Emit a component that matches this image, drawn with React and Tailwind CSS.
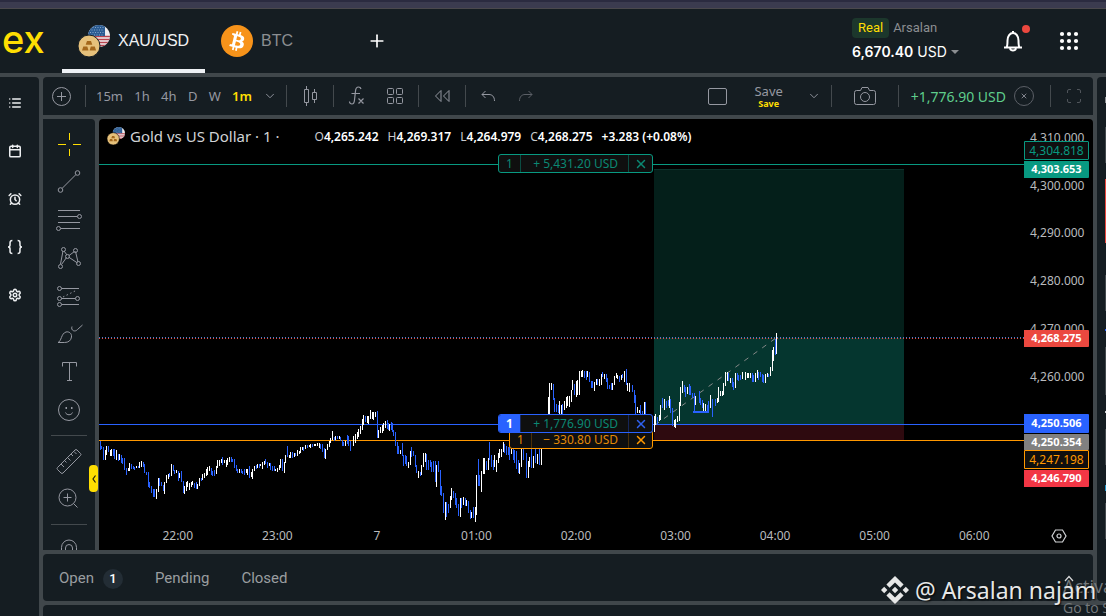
import React from "react";
import {
  Calendar,
  AlarmClock,
  Settings,
  List,
  ChevronDown,
  Plus,
  X,
} from "lucide-react";

/* Candle data: "x high low colour", measured in thirds of a pixel from each segment's origin. */
const SEGMENTS = [
  {
    x: -9,
    y: 271,
    bars: "31 153 180 b,34 168 178 b,40 170 210 b,46 180 210 w,49 168 196 w,55 168 185 b,61 180 198 w,64 177 197 w,70 177 198 b,73 178 208 b,79 180 210 w,85 193 213 b,88 192 210 w,94 195 220 b,97 204 222 b,103 205 240 b,109 235 255 b,115 234 243 w,118 219 243 w,124 222 238 b,130 228 238 b,133 231 240 b,139 228 234 w,145 228 234 b,148 216 234 w,154 213 231 w,160 216 231 b,163 222 250 b,169 246 255 b,175 246 290 b,178 275 293 b,184 288 310 b,190 297 320 b,193 297 321 b,199 297 326 w,205 264 306 w,208 265 290 b,214 276 288 b,220 285 303 b,223 276 312 w,229 255 280 w,235 252 267 w,238 249 261 b,244 222 258 w,250 225 244 b,253 240 252 b,259 240 250 w,265 243 272 b,268 248 264 w,274 243 276 b,280 273 309 b,283 288 312 w,289 276 303 w,292 273 290 w,298 279 300 w,304 275 290 w,307 273 285 w,313 279 294 b,319 276 297 b,322 282 298 w,328 264 288 w,334 264 273 b,337 252 270 w,343 249 264 w,349 237 258 w,352 231 256 w,358 228 243 w,364 234 255 b,367 243 258 b,373 240 258 b,379 228 252 w,382 210 235 w,388 210 228 w,394 208 220 w,397 201 225 b,403 210 220 w,409 210 231 w,412 205 225 w,418 201 216 w,424 201 216 b,427 206 216 b,433 208 235 b,439 225 243 b,442 238 250 b,448 237 249 w,454 238 249 b,457 243 252 b,463 237 255 b,469 237 250 w,472 237 255 w,478 228 264 b,484 246 260 w,487 237 267 w,493 228 243 w,499 226 237 b,502 222 234 w,508 222 234 b,511 222 228 w,517 216 237 w,523 213 225 w,526 207 222 b,532 216 234 b,538 220 228 w,541 220 240 b,547 228 243 b,553 228 242 b,556 237 243 w,562 234 246 w,568 225 240 w,571 207 235 w,577 207 244 b,583 216 249 w,586 195 220 w,592 168 200 b,598 195 204 w,601 186 204 w,607 186 204 b,613 189 201 w,616 189 198 b,622 180 198 w,628 183 192 w,631 171 189 w,637 171 180 w,640 171 183 b,646 165 177 w,652 165 174 b,658 165 171 w,661 162 174 w,667 163 171 b,673 162 168 w,676 162 168 w,682 160 168 w,688 160 174 w,691 162 178 b,697 162 186 b,703 173 204 b,706 177 207 w,712 162 180 w,718 153 172 w,721 144 160 w,727 123 150 w,733 141 153 b,736 138 150 w,742 138 148 b,748 138 148 w,751 141 153 b,757 150 167 b,760 156 168 b,766 153 168 w,772 135 162 b,775 138 168 b,781 152 183 b,790 138 168 w,796 132 158 w,802 125 146 w,805 117 140 w,811 108 132 w,817 88 122 w,820 75 105 w,826 78 95 b,832 78 100 w,835 78 102 w",
  },
  {
    x: 261,
    y: 231,
    bars: "1 228 252 w,7 210 240 w,10 195 222 w,16 198 213 b,22 198 210 w,25 198 216 w,31 180 208 w,37 186 206 w,40 186 210 w,46 186 202 w,52 183 264 b,55 240 264 w,61 231 249 w,67 225 250 w,70 220 243 w,76 213 234 w,82 210 238 b,85 219 240 b,88 222 243 w,94 216 240 b,97 219 245 b,100 240 258 b,106 245 288 b,112 276 312 b,115 288 312 b,121 300 312 w,127 278 318 b,130 315 348 b,136 315 342 b,139 318 348 b,145 336 354 w,151 303 345 w,154 291 322 b,160 303 318 b,166 315 350 b,169 345 370 b,175 363 384 w,181 366 378 b,184 345 375 w,190 310 352 w,196 309 336 w,199 312 360 b,205 330 360 b,211 330 350 b,214 336 366 b,220 333 366 b,226 333 395 b,229 345 410 w,235 333 366 b,241 360 435 b,244 408 438 b,250 430 489 b,256 456 510 w,259 456 500 b,265 462 490 b,271 438 475 w,274 414 450 w,280 423 444 b,286 429 465 b,289 444 474 b,295 462 498 b,301 444 501 w,304 444 475 b,310 441 465 w,316 444 468 b,319 450 468 w,325 453 490 b,331 480 506 b,334 486 504 w,340 470 503 b,346 471 516 w,349 375 495 w,355 327 408 b,358 375 408 b,364 363 426 w,370 324 372 w,373 324 372 w,379 333 360 b,385 324 360 w,388 275 330 b,394 315 350 b,400 330 360 b,403 315 350 w,409 330 366 w,415 309 340 w,418 297 325 w,424 297 322 w,430 276 306 w,433 282 310 b,439 288 315 b,445 290 315 b,448 290 328 b,454 290 310 w,460 297 330 b,463 300 340 b,469 303 358 b,475 330 368 b,478 340 372 w,484 297 350 w,490 297 330 b,499 310 384 b,505 333 384 w,508 320 350 w,514 290 354 b,520 318 354 w,526 297 340 b,532 312 342 w,538 297 345 b,544 297 345 w,565 140 195 w,568 99 192 w,574 99 120 w,580 102 150 b,583 144 186 b,589 162 186 b,595 165 190 b,598 153 192 w,604 165 192 w,607 162 192 b,613 153 180 w,619 141 174 w,622 138 168 w,628 138 170 w,634 120 156 w,637 90 120 w,643 102 135 b,649 93 140 w,652 90 135 w,658 63 135 w,664 63 80 w,667 60 82 w,673 63 84 b,679 63 90 b,682 63 82 w,688 66 96 b,694 93 115 b,697 93 114 b,703 96 123 w,709 87 105 w,712 87 105 b,718 87 108 w,724 72 105 w,727 66 80 b,733 72 87 w,739 72 96 b,742 84 117 b,748 105 118 b,754 99 120 b,757 99 120 w,763 78 104 w,769 69 84 w,772 75 87 w,778 78 96 b,784 75 90 w,787 72 84 b,793 63 95 w,799 57 105 b,802 98 123 w,808 99 126 w,817 105 126 b,823 120 160 b,826 135 192 b,832 171 190 w,838 180 190 w,841 165 195 b,847 183 195 b,853 156 192 w,856 156 192 b",
  },
  {
    x: 531,
    y: 201,
    bars: "73 288 336 w,76 282 315 w,82 291 313 b,88 285 303 w,91 255 300 w,97 234 264 b,103 237 270 w,109 243 265 b,115 240 258 b,118 228 264 w,121 238 280 b,127 265 318 b,133 300 320 w,136 297 324 w,142 288 305 w,148 246 303 w,151 201 258 w,157 183 219 w,163 195 216 b,166 201 230 b,172 201 222 w,178 192 225 b,181 198 225 b,187 219 235 b,193 220 275 b,196 228 255 w,208 213 250 b,211 235 256 b,217 240 265 b,220 250 279 w,226 252 276 w,232 255 276 b,235 243 276 b,241 225 264 w,247 238 291 b,256 237 258 b,262 234 250 w,265 201 246 w,271 213 228 w,277 213 228 w,280 190 225 w,286 156 198 w,292 156 183 w,295 158 183 b,301 174 188 w,307 174 200 b,310 186 210 b,316 158 204 w,322 160 180 b,325 165 184 b,331 165 180 b,337 156 178 w,346 156 180 w,352 158 173 w,355 158 173 w,361 158 172 w,367 158 186 b,370 165 186 b,376 159 186 w,382 150 175 w,385 156 180 b,391 156 172 b,397 162 186 b,400 165 188 b,406 162 188 w,412 159 171 w,415 162 171 b,421 141 168 w,427 90 152 w,430 81 123 w,436 57 105 b,439 39 102 w",
  },
];

const CANDLES = SEGMENTS.flatMap((s) =>
  s.bars.split(",").map((bar) => {
    const [x, hi, lo, c] = bar.split(" ");
    return {
      x: s.x + Math.floor(x / 3),
      y: s.y + Math.round(hi / 3),
      h: Math.max(1, Math.round((lo - hi) / 3)),
      up: c === "w",
    };
  })
);

const PRICES = [
  ["4,310.000", 19],
  ["4,300.000", 67],
  ["4,290.000", 114],
  ["4,280.000", 162],
  ["4,270.000", 210],
  ["4,260.000", 258],
];

const PRICE_TAGS = [
  ["4,304.818", 22, "h-[19px] border border-[#089981] bg-[#0f0f0f] text-[12px] text-[#089981]"],
  ["4,303.653", 42, "h-[17px] bg-[#089981] text-[11px] font-bold text-white"],
  ["4,268.275", 211, "h-[17px] bg-[#eb483f] text-[11px] font-bold text-white"],
  ["4,250.506", 295, "h-[19px] bg-[#2962ff] text-[11px] font-bold text-white"],
  ["4,250.354", 315, "h-[16px] bg-[#808080] text-[11px] font-bold text-white"],
  ["4,247.198", 331, "h-[19px] border border-[#ff9800] bg-[#0f0f0f] text-[12px] text-[#ff9800]"],
  ["4,246.790", 351, "h-[17px] bg-[#f23645] text-[11px] font-bold text-white"],
];

const TIMES = ["22:00", "23:00", "7", "01:00", "02:00", "03:00", "04:00", "05:00", "06:00"];

function Sep() {
  return <span className="h-[22px] w-px shrink-0 bg-[#43494d]" />;
}

function IconButton({ label, className = "", children }) {
  return (
    <button aria-label={label} className={`flex shrink-0 items-center justify-center ${className}`}>
      {children}
    </button>
  );
}

function GoldPair({ size, ring }) {
  return (
    <svg width={size} height={size} viewBox="0 0 32 32" className="shrink-0">
      <defs>
        <clipPath id={`flag${size}`}>
          <circle cx="21" cy="11" r="11" />
        </clipPath>
      </defs>
      <g clipPath={`url(#flag${size})`}>
        <rect x="10" width="22" height="22" fill="#f0eef0" />
        <path d="M10 11.500h22M10 14.500h22M10 17.500h22M10 20.500h22" stroke="#b8434e" strokeWidth="1.400" />
        <rect x="10" width="17" height="11" fill="#2b5c93" />
        <path d="M12 2.500h14M11 5h15M12 7.500h14M11 10h15" stroke="#9db8d6" strokeWidth=".8" strokeDasharray="1 1.500" />
      </g>
      <circle cx="11" cy="21" r="11" fill="#e6c17b" stroke={ring} strokeWidth="1" />
      <path d="M9 16h4l1.300 3.800H7.700zM5.300 21.500h4l1.200 4H4zM12.800 21.500h4l1.300 4h-6.500z" fill="#a4681c" />
    </svg>
  );
}

function Coin() {
  return (
    <svg width="32" height="32" viewBox="0 0 32 32" className="shrink-0">
      <circle cx="16" cy="16" r="16" fill="#f7931a" />
      <path
        fill="#fff"
        d="M23.189 14.020c.314-2.096-1.283-3.223-3.465-3.975l.708-2.840-1.728-.43-.69 2.765c-.454-.114-.92-.22-1.385-.326l.695-2.783L15.596 6l-.708 2.839c-.376-.086-.746-.17-1.104-.26l.002-.009-2.384-.595-.46 1.846s1.283.294 1.256.312c.7.175.826.638.805 1.006l-.806 3.235c.048.012.11.030.18.057l-.183-.045-1.130 4.532c-.086.212-.303.531-.793.410.018.025-1.256-.313-1.256-.313l-.858 1.978 2.250.561c.418.105.828.215 1.231.318l-.715 2.872 1.727.43.708-2.840c.472.127.930.245 1.378.357l-.706 2.828 1.728.43.715-2.866c2.948.558 5.164.333 6.097-2.333.752-2.146-.037-3.385-1.588-4.192 1.130-.26 1.980-1.003 2.207-2.538zm-3.950 5.538c-.533 2.147-4.148.986-5.320.695l.950-3.805c1.172.293 4.929.872 4.370 3.110zm.535-5.569c-.487 1.953-3.495.960-4.470.717l.860-3.450c.975.243 4.118.696 3.610 2.733z"
      />
    </svg>
  );
}

function Header() {
  return (
    <header className="flex h-16 items-stretch bg-[#151d22] pr-0.5 font-[Roboto,sans-serif]">
      <a href="#home" className="flex w-[62px] items-center pb-1 pl-[2px] font-[Inter,sans-serif] text-[38px] font-medium leading-none text-[#ffde02]">
        ex
      </a>
      <nav className="flex">
        <button className="flex w-[143px] items-center gap-2 border-b-4 border-[#eef1f5] pl-4 pt-1 font-[Liberation_Sans,sans-serif] text-base text-[#f0f1f2]">
          <GoldPair size={32} ring="#151d22" />
          XAU/USD
        </button>
        <button className="flex w-[143px] items-center gap-2 pl-4 font-[Liberation_Sans,sans-serif] text-base text-[#8b8e91]">
          <Coin />
          BTC
        </button>
        <IconButton label="Add instrument" className="w-[58px] text-white">
          <Plus size={20} strokeWidth={2} />
        </IconButton>
      </nav>
      <button className="ml-auto flex w-[140px] flex-col justify-center gap-1 text-left">
        <span className="flex items-center gap-1 text-[13px] leading-5">
          <span className="rounded-sm bg-[#1c372c] px-1.5 text-[#ffde02]">Real</span>
          <span className="text-[#8b8e91]">Arsalan</span>
        </span>
        <span className="flex items-center gap-1 pb-0.5 font-[Inter,sans-serif] text-[14px] leading-5 text-white">
          <b className="font-semibold">6,670.40</b> USD
          <svg width="8" height="4" viewBox="0 0 8 4">
            <path d="M0 0h8L4 4z" fill="#8b8e91" />
          </svg>
        </span>
      </button>
      <button aria-label="Notifications" className="relative flex w-[42px] items-center justify-center text-white">
        <svg width="22" height="22" viewBox="0 0 22 22" fill="none" stroke="currentColor" strokeWidth="2">
          <path d="M2 17.500h18M4.500 17.500c1-1.500 1-3 1-7C5.500 6 8 3 11 3s5.500 3 5.500 7.500c0 4 0 5.500 1 7M8 18.500c.5 1.500 1.500 2 3 2s2.500-.5 3-2M11 1v2" />
        </svg>
        <span className="absolute right-1 top-4 size-2 rounded-full bg-[#eb483f]" />
      </button>
      <IconButton label="Applications" className="w-[70px] text-white">
        <svg width="20" height="20" viewBox="0 0 20 20" fill="currentColor">
          {[3, 10, 17].map((y) => [3, 10, 17].map((x) => <circle key={`${x}-${y}`} cx={x} cy={y} r="2.100" />))}
        </svg>
      </IconButton>
    </header>
  );
}

function BracesIcon({ size, strokeWidth }) {
  return (
    <svg width={size} height={size} viewBox="0 0 24 24" fill="none" stroke="currentColor" strokeWidth={strokeWidth} className="overflow-visible">
      <path d="M7.500 1C4.500 1 3.500 2 3.500 4.500V8.500C3.500 10.500 2.500 12 0 12c2.500 0 3.500 1.500 3.500 3.500v4C3.500 22 4.500 23 7.500 23M16.500 1c3 0 4 1 4 3.500V8.500c0 2 1 3.500 3.500 3.500-2.500 0-3.500 1.500-3.500 3.500v4c0 2.500-1 3.500-4 3.500" />
    </svg>
  );
}

function Sidebar() {
  const items = [
    ["Watchlist", List],
    ["Calendar", Calendar],
    ["Alerts", AlarmClock],
    ["Scripts", BracesIcon],
    ["Settings", Settings],
  ];
  return (
    <aside className="flex w-[39px] shrink-0 flex-col gap-[34px] rounded-tr bg-[#151d22] pl-2 pt-[19px] text-[#eceef0]">
      {items.map(([label, Icon]) => (
        <button key={label} aria-label={label} className="size-3.5">
          <Icon size={14} strokeWidth={2.600} />
        </button>
      ))}
    </aside>
  );
}

function Toolbar() {
  return (
    <div className="flex h-[38px] items-center rounded-t bg-[#151d22] text-[13px] text-[#9598a1]">
      <IconButton label="Compare" className="mr-1.5 w-9">
        <svg width="20" height="20" viewBox="0 0 20 20" fill="none" stroke="currentColor">
          <circle cx="10.500" cy="10.500" r="9" />
          <path d="M10.500 6v9M6 10.500h9" />
        </svg>
      </IconButton>
      <Sep />
      <div className="ml-1 flex w-[168px] justify-between px-1.5 pt-0.5">
        {["15m", "1h", "4h", "D", "W"].map((t) => (
          <button key={t}>{t}</button>
        ))}
        <button className="font-semibold text-[#ffde02]">1m</button>
      </div>
      <IconButton label="More intervals" className="mr-1 w-6">
        <ChevronDown size={14} strokeWidth={1.600} />
      </IconButton>
      <Sep />
      <IconButton label="Chart type" className="w-[46px]">
        <svg width="16" height="22" viewBox="0 0 16 22" fill="none" stroke="currentColor">
          <path d="M2.500 4.500h4v13h-4zM4.500 1v3.500M4.500 17.500V21M10.500 7.500h4v7h-4zM12.500 4v3.500M12.500 14.500V18" />
        </svg>
      </IconButton>
      <Sep />
      <IconButton label="Indicators" className="w-[46px]">
        <svg width="18" height="20" viewBox="0 0 18 20" fill="none" stroke="currentColor" strokeWidth="1.200">
          <path d="M13 3c-.3-1.300-1.300-2-2.500-2C8.500 1 7.700 2.500 7.500 5L6.500 14c-.2 2.500-1 4-2.500 4-1.500 0-2.500-.8-2.500-2.500M3.500 7.500H12M10.500 12.500l5 5M15.500 12.500l-5 5" />
        </svg>
      </IconButton>
      <IconButton label="Layouts" className="mr-2 w-[30px]">
        <svg width="18" height="18" viewBox="0 0 18 18" fill="none" stroke="currentColor">
          <rect x="1.500" y="1.500" width="6" height="6" rx="1" />
          <rect x="10.500" y="1.500" width="6" height="6" rx="1" />
          <rect x="1.500" y="10.500" width="6" height="6" rx="1" />
          <rect x="10.500" y="10.500" width="6" height="6" rx="1" />
        </svg>
      </IconButton>
      <Sep />
      <IconButton label="Replay" className="w-[46px]">
        <svg width="16" height="14" viewBox="0 0 16 14" fill="none" stroke="currentColor">
          <path d="M7 1.500v11L1.500 7zM15 1.500v11L9.500 7z" />
        </svg>
      </IconButton>
      <Sep />
      <IconButton label="Undo" className="w-11">
        <svg width="14" height="12" viewBox="0 0 14 12" fill="none" stroke="currentColor">
          <path d="M4.500 1 1 4.500 4.500 8M1 4.500h7c3 0 5.500 2 5.500 6.500" />
        </svg>
      </IconButton>
      <IconButton label="Redo" className="w-8 text-[#5b5f66]">
        <svg width="14" height="12" viewBox="0 0 14 12" fill="none" stroke="currentColor">
          <path d="M9.500 1 13 4.500 9.500 8M13 4.500H6C3 4.500.5 6.500.5 11" />
        </svg>
      </IconButton>
      <div className="ml-auto flex items-center">
        <IconButton label="Select layout" className="w-[46px]">
          <svg width="19" height="17" viewBox="0 0 19 17" fill="none" stroke="currentColor">
            <rect x=".5" y=".5" width="18" height="16" rx="1.500" />
          </svg>
        </IconButton>
        <button className="flex w-14 flex-col items-center leading-[14px]">
          Save
          <span className="text-[9px] font-bold leading-[11px] text-[#ffde02]">Save</span>
        </button>
        <IconButton label="Manage layouts" className="w-[34px]">
          <ChevronDown size={14} strokeWidth={1.600} />
        </IconButton>
        <Sep />
        <IconButton label="Take a snapshot" className="w-[66px]">
          <svg width="22" height="18" viewBox="0 0 22 18" fill="none" stroke="currentColor">
            <path d="M2.500 3.500h4l1.500-3h6l1.500 3h4q2 0 2 2v10q0 2-2 2h-17q-2 0-2-2v-10q0-2 2-2z" />
            <circle cx="11" cy="10" r="4.500" />
          </svg>
        </IconButton>
        <Sep />
        <span className="ml-3 mr-2 text-[14px] text-[#5fce8c]">+1,776.90 USD</span>
        <IconButton label="Close all positions" className="mr-4 size-5 rounded-full border border-[#5b5f66]">
          <X size={8} strokeWidth={2.500} />
        </IconButton>
        <Sep />
        <IconButton label="Fullscreen" className="ml-1 w-[38px] text-[#50555b]">
          <svg width="14" height="14" viewBox="0 0 14 14" fill="none" stroke="currentColor">
            <path d="M.5 4V2Q.5.500 2 .5h2M10 .5h2q1.500 0 1.500 1.500v2M13.500 10v2q0 1.500-1.500 1.500h-2M4 13.500H2Q.5 13.500.5 12v-2" />
          </svg>
        </IconButton>
      </div>
    </div>
  );
}

const TOOLS = [
  ["Crosshair", <path key="p" stroke="#ffde02" d="M14.500 3v7M14.500 19v7M3 14.500h8M18 14.500h8" />],
  ["Trend line", <><circle cx="5.500" cy="22" r="2.300" /><circle cx="22.500" cy="5" r="2.300" /><path d="M7.200 20.300 20.800 6.700" /></>],
  ["Fibonacci", <><path d="M3 4.500h22M3 10.500h19.500M3 16.500h22M5.500 22.500H25" /><circle cx="24.500" cy="10.500" r="2" fill="#151d22" /><circle cx="3.500" cy="22.500" r="2" fill="#151d22" /></>],
  ["Patterns", <><path d="M5.500 20 8 7M9 7l3 4M13.500 13l9 6M14 11.500l5.500-4M20.500 7.500l2.500 10.500M11.500 13.500l-5 7" /><circle cx="5.500" cy="22.500" r="2" /><circle cx="8.500" cy="5.500" r="2" /><circle cx="12.500" cy="12.500" r="2" /><circle cx="20.500" cy="6.500" r="2" /><circle cx="23.500" cy="19.500" r="2" /></>],
  ["Forecasting", <><path d="M6.500 6.500H24M6.500 16.500h14M6.500 22.500H24" /><path d="M8 15 22 8" strokeDasharray="1.500 2.500" /><circle cx="4.500" cy="6.500" r="2" /><circle cx="4.500" cy="16.500" r="2" /><circle cx="4.500" cy="22.500" r="2" /><circle cx="22.500" cy="16.500" r="2" /></>],
  ["Brush", <><path d="M3 22.500c3.500-1 3-9 8-10.500 3-.8 6 1.500 5.500 5s-3 5.500-7 5.500zM17 6.500c-1.500 4 3 6 5.500 3L27.500 5" /></>],
  ["Text", <path key="p" d="M7.500 8.500v-4h14v4M14.500 4.500v18M12 22.500h5" />],
  ["Icons", <><circle cx="14" cy="14" r="10.500" /><path d="M10.500 16.500c1 3 6 3 7 0" /><path strokeWidth="2" d="M10.500 12h1.500M16 12h1.500" /></>],
];

function DrawTool({ label, children }) {
  return (
    <button aria-label={label} className="flex h-[38px] shrink-0 items-center justify-center">
      <svg width="28" height="28" viewBox="0 0 28 28" fill="none" stroke="#9598a1">
        {children}
      </svg>
    </button>
  );
}

function DrawingTools() {
  return (
    <div className="relative flex w-[52px] shrink-0 flex-col rounded-tr bg-[#151d22]">
      <div className="flex h-[431px] flex-col overflow-hidden pt-[6px]">
        {TOOLS.map(([label, art]) => (
          <DrawTool key={label} label={label}>
            {art}
          </DrawTool>
        ))}
        <hr className="mx-2 my-[6px] border-[#43494d]" />
        <DrawTool label="Measure">
          <path d="M2.500 20.500 20 3q1-1 2 0l3.500 3.500q1 1 0 2L8 26q-1 1-2 0l-3.500-3.500q-1-1 0-2zM6 17l3 3M9.500 13.500l2 2M12.500 10.500l3 3M16 7l2 2M19 4.500l2.500 2.500" />
        </DrawTool>
        <DrawTool label="Zoom in">
          <circle cx="12.500" cy="12.500" r="8.500" />
          <path d="M12.500 8.500v8M8.500 12.500h8M18.500 18.500l4 4" />
        </DrawTool>
        <hr className="mx-2 my-[6px] border-[#43494d]" />
        <DrawTool label="Magnet">
          <path d="M6.500 24V11.500a7.500 7.500 0 0 1 15 0V24M10.500 24V12a3.500 3.500 0 0 1 7 0V24" />
        </DrawTool>
      </div>
      <button aria-label="Hide drawing toolbar" className="absolute -right-[3px] top-[346px] z-10 flex h-[27px] w-[9px] items-center justify-center rounded bg-[#ffde02]">
        <svg width="4" height="8" viewBox="0 0 4 8" fill="none" stroke="#26220a" strokeWidth="1.200">
          <path d="M3.500.5 1 4l2.500 3.500" />
        </svg>
      </button>
    </div>
  );
}

function OrderTag({ qty, sign, pnl, className, qtyClass, pnlClass, closeClass, divider }) {
  return (
    <div className={`absolute flex items-stretch overflow-hidden rounded-[3px] border bg-[#0f0f0f] text-[12px] leading-none ${className}`}>
      <span className={`flex w-[22px] items-center justify-center border-r ${divider} ${qtyClass}`}>{qty}</span>
      <span className={`flex flex-1 items-center justify-end gap-[3px] pr-2.5 ${pnlClass}`}>
        <span>{sign}</span>
        <span>{pnl}</span>
      </span>
      <button aria-label={`Close ${pnl}`} className={`flex w-6 items-center justify-center border-l ${divider} ${closeClass}`}>
        <X size={14} strokeWidth={2.500} />
      </button>
    </div>
  );
}

function Plot() {
  return (
    <div className="relative min-w-0 flex-1">
      <svg width="100%" height="405" className="block" shapeRendering="crispEdges">
        <path d="M555 50h250v169H555z" fill="#041f1a" />
        <path d="M555 219h250v86H555z" fill="#05362f" />
        <path d="M555 306h250v15H555z" fill="#2e0a0f" />
        <path d="M555 50.500h250" stroke="#0a332b" />
        <line x1="0" x2="100%" y1="45.500" y2="45.500" stroke="#089981" />
        <line x1="0" x2="100%" y1="218.500" y2="218.500" stroke="#3d84d6" strokeDasharray="1 2" />
        <line x1="0" x2="100%" y1="219.500" y2="219.500" stroke="#eb483f" strokeDasharray="1 2" />
        <line x1="0" x2="100%" y1="305.500" y2="305.500" stroke="#2962ff" />
        <line x1="0" x2="100%" y1="321.500" y2="321.500" stroke="#ff9800" />
        <path d="M556 306 677 219" stroke="#858988" strokeDasharray="5 6" shapeRendering="auto" />
        {CANDLES.map((c, i) => (
          <rect key={i} x={c.x} y={c.y} width="1" height={c.h} fill={c.up ? "#ffffff" : "#2962ff"} />
        ))}
        <path d="M594 293h16" stroke="#2962ff" strokeWidth="2" />
      </svg>
      <div className="absolute left-2 top-[6px] flex items-center gap-[5px] whitespace-nowrap text-[15px] leading-5 text-[#d1d3d6]">
        <GoldPair size={18} ring="#000" />
        <h1>Gold vs US Dollar · 1 ·</h1>
        <p className="ml-[30px] flex gap-[9px] pt-0.5 text-[12px] text-[#c8cacd]">
          {[["O", "4,265.242"], ["H", "4,269.317"], ["L", "4,264.979"], ["C", "4,268.275"]].map(([k, v]) => (
            <span key={k}>
              {k}
              <span className="font-semibold text-white">{v}</span>
            </span>
          ))}
          <span className="font-semibold text-white">+3.283 (+0.08%)</span>
        </p>
      </div>
      <OrderTag
        qty="1"
        sign="+"
        pnl="5,431.20 USD"
        className="left-[399px] top-[35px] h-[19px] w-[155px] border-[#089981]"
        divider="border-[#0b4c42]"
        qtyClass="text-[#0b8873]"
        pnlClass="text-[#0b8873]"
        closeClass="text-[#0b8873]"
      />
      <OrderTag
        qty="1"
        sign="−"
        pnl="330.80 USD"
        className="left-[410px] top-[311px] h-[19px] w-[144px] border-[#ff9800]"
        divider="border-[#4a3009]"
        qtyClass="text-[#e28a07]"
        pnlClass="text-[#e28a07]"
        closeClass="text-[#ff9800]"
      />
      <OrderTag
        qty="1"
        sign="+"
        pnl="1,776.90 USD"
        className="left-[399px] top-[295px] h-[19px] w-[155px] border-[#2962ff]"
        divider="border-[#16265a]"
        qtyClass="bg-[#2962ff] font-bold text-white"
        pnlClass="text-[#0b8873]"
        closeClass="text-[#2f62f0]"
      />
      <div className="grid w-[925px] grid-cols-9 pl-[29px] text-center text-[12px] leading-6 text-[#b9bbbe]">
        {TIMES.map((t) => (
          <span key={t}>{t}</span>
        ))}
      </div>
    </div>
  );
}

function PriceAxis() {
  return (
    <div className="relative w-[69px] shrink-0 text-[12px]">
      {PRICES.map(([p, y]) => (
        <span key={p} className="absolute left-[6px] -translate-y-1/2 leading-4 text-[#b9bbbe]" style={{ top: y }}>
          {p}
        </span>
      ))}
      {PRICE_TAGS.map(([p, y, cls]) => (
        <span key={p} className={`absolute left-0 flex w-[65px] items-center justify-center rounded-r-[1px] ${cls}`} style={{ top: y }}>
          {p}
        </span>
      ))}
      <button aria-label="Chart settings" className="absolute bottom-1.5 left-[27px]">
        <svg width="16" height="16" viewBox="0 0 16 16" fill="none" stroke="#d1d3d6" strokeWidth="1.200">
          <path d="M4.500 2h7L15 8l-3.500 6h-7L1 8z" />
          <circle cx="8" cy="8" r="2" />
        </svg>
      </button>
    </div>
  );
}

function RightEdge() {
  const marks = [
    "mt-[20px] h-1.5 bg-[#8b8e91]",
    "mt-6 h-9 bg-[#43494d]",
    "mt-4 h-16 bg-[#eb483f]",
    "mt-8 h-9 bg-[#43494d]",
    "mt-[18px] h-0.5 bg-[#2962ff]",
    "mt-4 h-12 bg-[#43494d]",
    "mt-4 h-0.5 bg-[#c8cacd]",
    "mt-4 h-9 bg-[#43494d]",
    "mt-5 h-1.5 bg-[#2196c9]",
    "mt-3 h-9 bg-[#43494d]",
  ];
  return (
    <aside className="flex w-[9px] shrink-0 flex-col items-end rounded-l bg-[#151d22]">
      {marks.map((m, i) => (
        <span key={i} className={`w-px shrink-0 ${m}`} />
      ))}
    </aside>
  );
}

function Positions() {
  return (
    <div className="flex h-[47px] items-center gap-8 rounded bg-[#151d22] px-4 pt-0.5 font-[Roboto,sans-serif] text-[15px] text-[#9a9da0]">
      <button className="flex items-center gap-[9px]">
        Open
        <span className="flex size-5 items-center justify-center rounded-full bg-[#232d35] text-[13px] font-medium text-white">1</span>
      </button>
      <button>Pending</button>
      <button>Closed</button>
    </div>
  );
}

function Watermarks() {
  return (
    <div className="pointer-events-none absolute bottom-0 right-0 h-[46px] w-[230px] overflow-hidden">
      <p className="absolute left-[187px] top-1 whitespace-nowrap font-[Open_Sans,sans-serif] text-[18px] leading-6 text-[#74797c]">
        Activate
        <span className="block text-[14px] leading-5">Go to Settings</span>
      </p>
      <svg width="10" height="7" viewBox="0 0 10 7" fill="none" stroke="#d8d9da" strokeWidth="1.200" className="absolute left-[188px] top-[5px]">
        <path d="M1 6l4-4.500L9 6" />
      </svg>
      <div className="absolute left-[5px] top-1 flex items-center gap-1.5 whitespace-nowrap text-[23px] leading-8 text-[#e6e7e7] [text-shadow:1px_1px_2px_#000]">
        <svg width="28" height="28" viewBox="0 0 28 28" fill="#e6e7e7">
          <path d="M14 0l8.600 8.600-3.200 3.200L14 6.400l-5.400 5.400-3.200-3.200zM14 28l8.600-8.600-3.200-3.200-5.400 5.400-5.400-5.400-3.200 3.200zM3.200 10.800 6.400 14l-3.200 3.200L0 14zM24.800 10.800 28 14l-3.200 3.200-3.200-3.200zM14 10.800l3.200 3.200-3.200 3.200-3.200-3.200z" />
        </svg>
        @ Arsalan najam
      </div>
    </div>
  );
}

export default function App() {
  return (
    <div className="relative flex h-screen flex-col overflow-hidden bg-[#40474b] font-[Noto_Sans,sans-serif]">
      <div className="h-2 shrink-0 border-t-2 border-[#2b2b40] bg-[#3b3b4f]" />
      <div className="h-px shrink-0 bg-[#4b494d]" />
      <div className="shrink-0">
        <Header />
      </div>
      <div className="flex min-h-0 flex-1 gap-1 pt-1">
        <Sidebar />
        <div className="flex min-w-0 flex-1 flex-col gap-1">
          <div className="flex shrink-0 gap-1">
            <main className="flex min-w-0 flex-1 flex-col gap-1">
              <Toolbar />
              <div className="flex gap-1">
                <DrawingTools />
                <section className="flex min-w-0 flex-1 overflow-hidden rounded-t bg-black">
                  <Plot />
                  <PriceAxis />
                </section>
              </div>
              <Positions />
            </main>
            <RightEdge />
          </div>
          <div className="min-h-4 flex-1 rounded-tl bg-[#151d22]" />
        </div>
      </div>
      <Watermarks />
    </div>
  );
}
